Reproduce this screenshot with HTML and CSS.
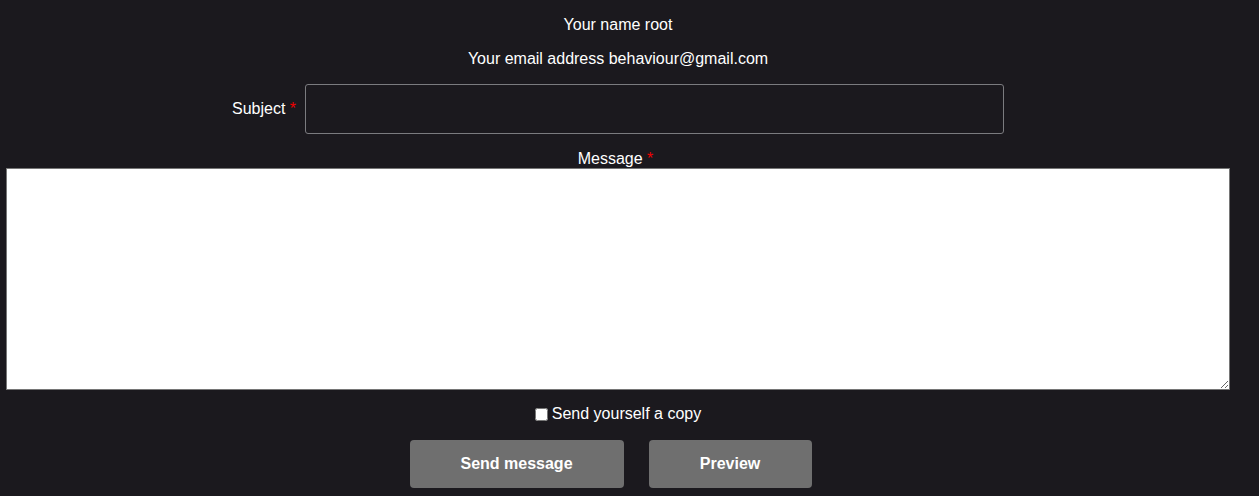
FILE: index.html
```html
<!DOCTYPE html>
<html lang="en">
<head>
<meta charset="utf-8">
<title>Contact</title>
<link rel="stylesheet" href="styles.css">
</head>
<body>
<form class="contact">
  <div class="line line-name">Your name root</div>
  <div class="line line-email">Your email address behaviour@gmail.com</div>
  <div class="subject-row">
    <label class="label" for="subject">Subject <span class="req">*</span></label>
    <input class="subject-input" id="subject" type="text">
  </div>
  <label class="line message-label" for="message">Message <span class="req">*</span></label>
  <textarea class="message" id="message"></textarea>
  <div class="copy-row">
    <input class="copy-box" type="checkbox" id="copy">
    <label for="copy">Send yourself a copy</label>
  </div>
  <div class="actions">
    <button type="button" class="btn btn-send">Send message</button>
    <button type="button" class="btn btn-preview">Preview</button>
  </div>
</form>
</body>
</html>
```
FILE: styles.css
```css
html, body {
  margin: 0;
  padding: 0;
  background: #1b191e;
  color: #ffffff;
  font-family: "Liberation Sans", Arial, sans-serif;
  font-size: 16px;
  height: 100%;
}
.contact {
  width: 1224px;
  margin-left: 6px;
  padding-top: 16px;
  display: flex;
  flex-direction: column;
  align-items: center;
}
.line {
  display: block;
  line-height: 18px;
  text-align: center;
}
.line-email {
  margin-top: 16px;
}
.subject-row {
  margin-top: 16px;
  display: flex;
  align-items: center;
  gap: 9px;
}
.label {
  line-height: 18px;
}
.req {
  color: #f00000;
}
.subject-input {
  box-sizing: border-box;
  width: 699px;
  height: 50px;
  margin: 0;
  background: transparent;
  border: 1px solid #7b7b7f;
  border-radius: 3px;
  color: #fff;
  font: inherit;
  padding: 0 10px;
}
.message-label {
  margin-top: 16px;
  margin-right: 5px;
}
.message {
  box-sizing: border-box;
  align-self: stretch;
  width: 1224px;
  height: 222px;
  margin: 0;
  background: #ffffff;
  border: 1px solid #767676;
  padding: 2px;
  font: inherit;
  color: #000;
  resize: both;
  display: block;
}
.copy-row {
  margin-top: 15px;
  display: flex;
  align-items: center;
  gap: 4px;
  line-height: 18px;
}
.copy-box {
  margin: 0;
  width: 13px;
  height: 13px;
}
.actions {
  margin-top: 17px;
  margin-right: 15px;
  display: flex;
  gap: 25px;
}
.btn {
  height: 48px;
  border: none;
  border-radius: 4px;
  background: #6f6f6f;
  color: #ffffff;
  font-family: "Liberation Sans", Arial, sans-serif;
  font-weight: bold;
  font-size: 16px;
  cursor: pointer;
}
.btn-send {
  width: 214px;
}
.btn-preview {
  width: 163px;
}
```
